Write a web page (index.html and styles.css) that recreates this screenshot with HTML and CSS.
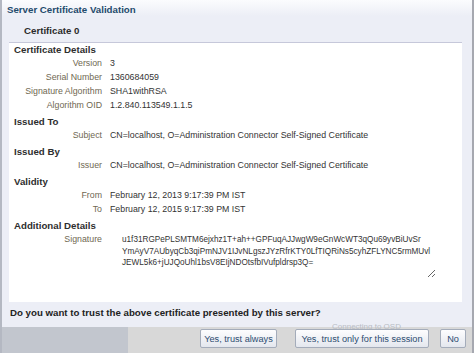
FILE: index.html
```html
<!DOCTYPE html>
<html>
<head>
<meta charset="utf-8">
<link rel="stylesheet" href="styles.css">
</head>
<body>
<div class="dialog">
  <div class="titlebar">Server Certificate Validation</div>
  <div class="tab">Certificate 0</div>
  <div class="panel">
    <div class="section">
      <div class="heading">Certificate Details</div>
      <div class="field"><span class="label">Version</span><span class="value">3</span></div>
      <div class="field"><span class="label">Serial Number</span><span class="value">1360684059</span></div>
      <div class="field"><span class="label">Signature Algorithm</span><span class="value">SHA1withRSA</span></div>
      <div class="field"><span class="label">Algorithm OID</span><span class="value">1.2.840.113549.1.1.5</span></div>
    </div>
    <div class="section">
      <div class="heading">Issued To</div>
      <div class="field"><span class="label">Subject</span><span class="value">CN=localhost, O=Administration Connector Self-Signed Certificate</span></div>
    </div>
    <div class="section">
      <div class="heading">Issued By</div>
      <div class="field"><span class="label">Issuer</span><span class="value">CN=localhost, O=Administration Connector Self-Signed Certificate</span></div>
    </div>
    <div class="section">
      <div class="heading">Validity</div>
      <div class="field"><span class="label">From</span><span class="value">February 12, 2013 9:17:39 PM IST</span></div>
      <div class="field"><span class="label">To</span><span class="value">February 12, 2015 9:17:39 PM IST</span></div>
    </div>
    <div class="section">
      <div class="heading">Additional Details</div>
      <div class="field sig"><span class="label">Signature</span><textarea class="sigbox" readonly wrap="off">u1f31RGPePLSMTM6ejxhz1T+ah++GPFuqAJJwgW9eGnWcWT3qQu69yvBiUvSr
YmAyV7AUbyqCb3qiPmNJV1IJvNLgszJYzRfrKTY0LfTIQRiNs5cyhZFLYNC5rmMUvl
JEWL5k6+jUJQoUhl1bsV8EIjNDOtsfbIVufpldrsp3Q=</textarea></div>
    </div>
  </div>
  <div class="question">Do you want to trust the above certificate presented by this server?</div>
  <div class="footer">
    <div class="footer-left"></div>
    <div class="footer-right">
      <span class="ghost">Connecting to OSD</span>
      <button class="btn btn-always">Yes, trust always</button>
      <button class="btn btn-session">Yes, trust only for this session</button>
      <button class="btn btn-no">No</button>
    </div>
  </div>
</div>
</body>
</html>
```

FILE: styles.css
```css
* { box-sizing: border-box; }
html, body { margin: 0; padding: 0; }
body {
  width: 474px;
  height: 353px;
  overflow: hidden;
  font-family: "Liberation Sans", Arial, sans-serif;
  font-size: 8.8px;
  color: #333;
  background: #d6d6d8;
}
.dialog {
  width: 474px;
  height: 353px;
  display: flex;
  flex-direction: column;
  background: #eceef6;
  border-left: 2px solid #b4b8c2;
  border-right: 2px solid #a6a8b0;
}
.titlebar {
  height: 20px;
  line-height: 20px;
  padding-left: 5px;
  font-weight: bold;
  font-size: 9.7px;
  color: #1f4b6c;
  background: linear-gradient(#fbfcfe, #eceef6 80%);
}
.tab {
  height: 22px;
  line-height: 22px;
  padding-left: 22px;
  font-weight: bold;
  font-size: 9.7px;
  color: #2b2b2b;
}
.panel {
  height: 260px;
  margin: 0 10px 0 7px;
  background: #fff;
  border-top: 1px solid #c6c8da;
  padding: 1px 0 0 5px;
}
.section { margin-bottom: 4px; }
.heading {
  line-height: 12px;
  font-weight: bold;
  font-size: 9.7px;
  color: #2e2e2e;
}
.field {
  display: flex;
  line-height: 14px;
}
.label {
  width: 88px;
  flex: none;
  text-align: right;
  color: #6f6852;
  margin-right: 8px;
}
.value { color: #333; white-space: nowrap; }
.sig { height: 46px; }
.sigbox {
  margin: 1px 0 0 8px;
  width: 318px;
  height: 45px;
  border: none;
  outline: none;
  padding: 1px 4px;
  font-family: "Liberation Sans", Arial, sans-serif;
  font-size: 8.2px;
  line-height: 11.5px;
  color: #333;
  background: #fff;
  overflow: hidden;
  resize: both;
}
.question {
  height: 25px;
  line-height: 21px;
  padding-left: 8px;
  font-weight: bold;
  font-size: 9.7px;
  color: #222;
}
.footer {
  flex: 1;
  display: flex;
}
.footer-left {
  width: 126px;
  background: #c2c6ce;
}
.footer-right {
  flex: 1;
  position: relative;
  background: #d8d8d8;
  display: flex;
  align-items: flex-start;
  padding-top: 2px;
}
.ghost {
  position: absolute;
  left: 204px;
  top: -5px;
  font-size: 8px;
  color: #b8bcc4;
}
.btn {
  position: relative;
  height: 19px;
  padding: 0;
  font-family: "Liberation Sans", Arial, sans-serif;
  font-size: 9.2px;
  color: #2d4c70;
  background: linear-gradient(#fdfdfe, #e4e7ee);
  border: 1px solid #a4acba;
  border-radius: 2px;
}
.btn-always { width: 77px; margin-left: 72px; }
.btn-session { width: 134px; margin-left: 18px; }
.btn-no { width: 26px; margin-left: 11px; }
```
